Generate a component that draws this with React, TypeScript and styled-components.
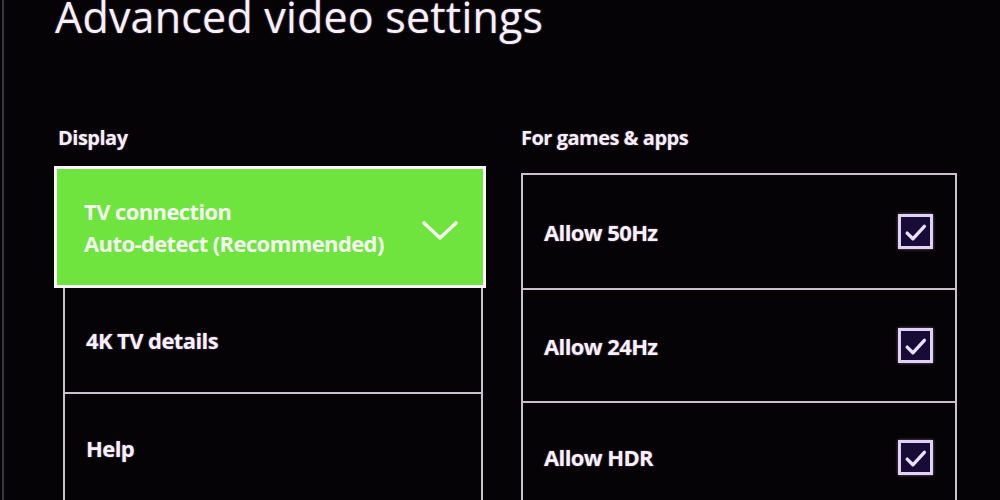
import React from "react";
import styled, { createGlobalStyle } from "styled-components";

const GlobalStyle = createGlobalStyle`
  html, body {
    margin: 0;
    padding: 0;
    background: #060307;
    overflow: hidden;
  }
  body {
    font-family: "Open Sans", "Noto Sans", "DejaVu Sans", sans-serif;
    color: #f6eef8;
  }
`;

const Screen = styled.div`
  width: 1000px;
  height: 500px;
  box-sizing: border-box;
  overflow: hidden;
  margin-left: 2px;
  border-left: 2px solid #3b3740;
  background: #060307;
`;

const Title = styled.h1`
  margin: 0 0 0 51px;
  font-size: 43px;
  line-height: 0.8;
  font-weight: 400;
  letter-spacing: 0.2px;
  color: #f8f0fa;
  text-shadow: 0 0 2px rgba(240, 200, 250, 0.45);
`;

const Columns = styled.div`
  display: grid;
  grid-template-columns: 432px 436px;
  column-gap: 35px;
  padding: 92px 0 0 50px;
  align-items: start;
`;

const Column = styled.section`
  display: flex;
  flex-direction: column;
`;

const Heading = styled.div<{ $gap: number; $indent: number }>`
  margin: 0 0 ${({ $gap }) => $gap}px ${({ $indent }) => $indent}px;
  font-size: 20px;
  line-height: 24px;
  font-weight: 700;
  letter-spacing: -0.5px;
  color: #f6eef8;
  text-shadow: 0 0 2px rgba(240, 200, 250, 0.4);
`;

const FocusCard = styled.div`
  height: 122px;
  box-sizing: border-box;
  border: 3px solid #fbf6fb;
  background: #6fe33e;
  display: flex;
  align-items: center;
  justify-content: space-between;
  padding: 0 24px 0 27px;
`;

const CardText = styled.div`
  display: flex;
  flex-direction: column;
  font-size: 22px;
  line-height: 32px;
  font-weight: 700;
  letter-spacing: -0.6px;
  color: #f4fbef;
`;

const Chevron = styled.svg`
  width: 38px;
  height: 24px;
  margin-top: 8px;
`;

const List = styled.div<{ $inset: boolean }>`
  display: flex;
  flex-direction: column;
  margin: ${({ $inset }) => ($inset ? "0 3px 0 9px" : "0")};
  border-left: 2px solid #c9c2cc;
  border-right: 2px solid #c9c2cc;
  border-top: ${({ $inset }) => ($inset ? "none" : "2px solid #c9c2cc")};
`;

const Row = styled.div<{ $height: number; $first?: boolean }>`
  height: ${({ $height }) => $height}px;
  box-sizing: border-box;
  display: flex;
  align-items: center;
  justify-content: space-between;
  padding: 0 22px 0 21px;
  border-top: ${({ $first }) => ($first ? "none" : "2px solid #c9c2cc")};
`;

const RowLabel = styled.span`
  font-size: 22px;
  font-weight: 700;
  letter-spacing: -0.6px;
  color: #f8f0fa;
  text-shadow: 0 0 2px rgba(240, 200, 250, 0.45);
`;

const CheckBox = styled.span`
  width: 35px;
  height: 35px;
  box-sizing: border-box;
  border: 3px solid #e2d2f2;
  background: #170c38;
  display: flex;
  align-items: center;
  justify-content: center;
  box-shadow: 0 0 3px rgba(210, 180, 250, 0.5);

  svg {
    width: 25px;
    height: 25px;
  }
`;

const Check = () => (
  <CheckBox>
    <svg viewBox="0 0 24 24" fill="none">
      <path
        d="M4 13.5 L9.5 19 L20.5 7"
        stroke="#ece0f6"
        strokeWidth="3.2"
        strokeLinecap="round"
        strokeLinejoin="round"
      />
    </svg>
  </CheckBox>
);

const toggles = [
  { label: "Allow 50Hz", height: 113 },
  { label: "Allow 24Hz", height: 113 },
  { label: "Allow HDR", height: 110 },
];

export default function App() {
  return (
    <>
      <GlobalStyle />
      <Screen>
        <Title>Advanced video settings</Title>
        <Columns>
          <Column>
            <Heading $gap={16} $indent={4}>Display</Heading>
            <FocusCard>
              <CardText>
                <span>TV connection</span>
                <span>Auto-detect (Recommended)</span>
              </CardText>
              <Chevron viewBox="0 0 38 24" fill="none">
                <path
                  d="M3 4 L19 19 L35 4"
                  stroke="#f4fbef"
                  strokeWidth="3.6"
                  strokeLinecap="round"
                  strokeLinejoin="round"
                />
              </Chevron>
            </FocusCard>
            <List $inset>
              <Row $height={104} $first>
                <RowLabel>4K TV details</RowLabel>
              </Row>
              <Row $height={110}>
                <RowLabel>Help</RowLabel>
              </Row>
            </List>
          </Column>
          <Column>
            <Heading $gap={23} $indent={0}>For games &amp; apps</Heading>
            <List $inset={false}>
              {toggles.map((t, i) => (
                <Row key={t.label} $height={t.height} $first={i === 0}>
                  <RowLabel>{t.label}</RowLabel>
                  <Check />
                </Row>
              ))}
            </List>
          </Column>
        </Columns>
      </Screen>
    </>
  );
}
